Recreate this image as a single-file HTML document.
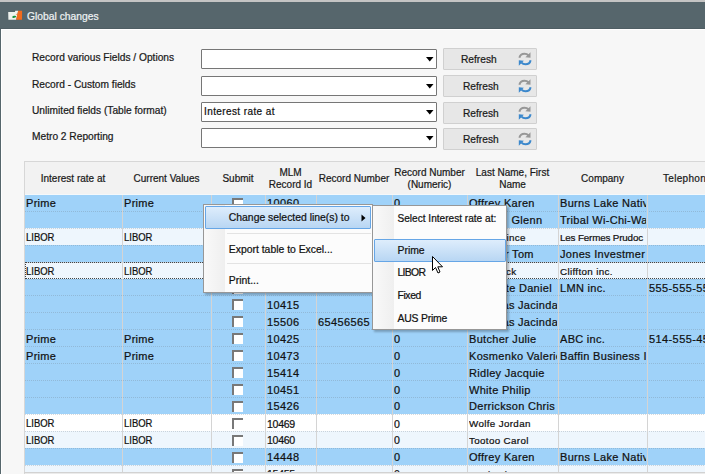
<!DOCTYPE html><html><head><meta charset="utf-8"><style>
*{box-sizing:border-box;margin:0;padding:0}
html,body{width:705px;height:474px;overflow:hidden;background:#f7f7f7;font-family:"Liberation Sans",sans-serif;position:relative}
.a{position:absolute}
.t{position:absolute;height:0;line-height:0;white-space:nowrap}
.t span{display:inline-block;vertical-align:baseline;-webkit-text-stroke-width:0.22px}
</style></head><body>
<div class="a" style="left:0;top:0;width:705px;height:2px;background:#c4c4c4"></div>
<div class="a" style="left:0;top:2px;width:705px;height:27px;background:#56666c"></div>
<div class="a" style="left:0;top:28px;width:705px;height:1px;background:#4f5e64"></div>
<div class="a" style="left:0;top:29px;width:1px;height:445px;background:#56666c"></div>
<div class="a" style="left:1px;top:29px;width:704px;height:1px;background:#fff"></div>
<div class="a" style="left:1px;top:29px;width:1px;height:445px;background:#fff"></div>
<svg class="a" style="left:6px;top:8px" width="18" height="14" viewBox="0 0 18 14">
<path d="M2.2 4.1 L9 4.1 L9.2 2.8 L12.2 2.8 L10.2 11.8 L2.4 11.8 Z" fill="#eef2ee"/>
<path d="M12.1 2.8 L16.1 2.8 L16 11.8 L10.1 11.8 Z" fill="#f26b1d"/>
<circle cx="10.5" cy="6.3" r="0.6" fill="#f5a070"/>
<ellipse cx="8.2" cy="8.85" rx="2" ry="1" transform="rotate(-12 8.2 8.85)" fill="#12923e"/>
</svg>
<div class="t" style="left:27px;top:16.65px;font-size:10.3px;color:#eef2f3;"><span>Global changes</span></div>
<div class="t" style="left:32px;top:57.68px;font-size:10.2px;color:#1a1a1a;"><span>Record various Fields / Options</span></div>
<div class="t" style="left:32px;top:84.68px;font-size:10.2px;color:#1a1a1a;"><span>Record - Custom fields</span></div>
<div class="t" style="left:32px;top:110.58px;font-size:10.2px;color:#1a1a1a;"><span>Unlimited fields (Table format)</span></div>
<div class="t" style="left:32px;top:136.68px;font-size:10.2px;color:#1a1a1a;"><span>Metro 2 Reporting</span></div>
<div class="a" style="left:201px;top:49px;width:236px;height:20px;border:1px solid #767676;border-radius:1px;background:#fff"></div>
<svg class="a" style="left:426px;top:57px" width="8" height="5" viewBox="0 0 8 5"><path d="M0 0 L7.5 0 L3.75 4.5 Z" fill="#000"/></svg>
<div class="a" style="left:443px;top:48px;width:94px;height:22px;border:1px solid #d0d0d0;border-radius:1px;background:#e7e7e7"></div>
<div class="t" style="left:461px;top:59.88px;font-size:10.2px;color:#1a1a1a;"><span>Refresh</span></div>
<svg class="a" style="left:518px;top:52px" width="14" height="14" viewBox="0 0 14 14">
<path d="M1.4 5.8 C2 2.9 4 1.7 6.5 1.7 C8.3 1.7 9.6 2.3 10.4 3.3" stroke="#979797" stroke-width="2" fill="none"/>
<path d="M12.5 0.2 L12.5 5.8 L7.4 5.3 Z" fill="#979797"/>
<path d="M12.6 8.2 C12 11.1 10 12.3 7.5 12.3 C5.7 12.3 4.4 11.7 3.6 10.7" stroke="#3c88cc" stroke-width="2" fill="none"/>
<path d="M0.8 8.2 L0.8 13.8 L5.8 8.7 Z" fill="#3c88cc"/>
</svg>
<div class="a" style="left:201px;top:76px;width:236px;height:20px;border:1px solid #767676;border-radius:1px;background:#fff"></div>
<svg class="a" style="left:426px;top:84px" width="8" height="5" viewBox="0 0 8 5"><path d="M0 0 L7.5 0 L3.75 4.5 Z" fill="#000"/></svg>
<div class="a" style="left:443px;top:75px;width:94px;height:22px;border:1px solid #d0d0d0;border-radius:1px;background:#e7e7e7"></div>
<div class="t" style="left:463px;top:86.88px;font-size:10.2px;color:#1a1a1a;"><span>Refresh</span></div>
<svg class="a" style="left:518px;top:79px" width="14" height="14" viewBox="0 0 14 14">
<path d="M1.4 5.8 C2 2.9 4 1.7 6.5 1.7 C8.3 1.7 9.6 2.3 10.4 3.3" stroke="#979797" stroke-width="2" fill="none"/>
<path d="M12.5 0.2 L12.5 5.8 L7.4 5.3 Z" fill="#979797"/>
<path d="M12.6 8.2 C12 11.1 10 12.3 7.5 12.3 C5.7 12.3 4.4 11.7 3.6 10.7" stroke="#3c88cc" stroke-width="2" fill="none"/>
<path d="M0.8 8.2 L0.8 13.8 L5.8 8.7 Z" fill="#3c88cc"/>
</svg>
<div class="a" style="left:201px;top:102px;width:236px;height:20px;border:1px solid #767676;border-radius:1px;background:#fff"></div>
<svg class="a" style="left:426px;top:110px" width="8" height="5" viewBox="0 0 8 5"><path d="M0 0 L7.5 0 L3.75 4.5 Z" fill="#000"/></svg>
<div class="t" style="left:204px;top:112.15px;font-size:10.0px;color:#111;letter-spacing:0.4px"><span>Interest rate at</span></div>
<div class="a" style="left:443px;top:102px;width:94px;height:22px;border:1px solid #d0d0d0;border-radius:1px;background:#e7e7e7"></div>
<div class="t" style="left:463px;top:113.88px;font-size:10.2px;color:#1a1a1a;"><span>Refresh</span></div>
<svg class="a" style="left:518px;top:106px" width="14" height="14" viewBox="0 0 14 14">
<path d="M1.4 5.8 C2 2.9 4 1.7 6.5 1.7 C8.3 1.7 9.6 2.3 10.4 3.3" stroke="#979797" stroke-width="2" fill="none"/>
<path d="M12.5 0.2 L12.5 5.8 L7.4 5.3 Z" fill="#979797"/>
<path d="M12.6 8.2 C12 11.1 10 12.3 7.5 12.3 C5.7 12.3 4.4 11.7 3.6 10.7" stroke="#3c88cc" stroke-width="2" fill="none"/>
<path d="M0.8 8.2 L0.8 13.8 L5.8 8.7 Z" fill="#3c88cc"/>
</svg>
<div class="a" style="left:201px;top:128px;width:236px;height:20px;border:1px solid #767676;border-radius:1px;background:#fff"></div>
<svg class="a" style="left:426px;top:136px" width="8" height="5" viewBox="0 0 8 5"><path d="M0 0 L7.5 0 L3.75 4.5 Z" fill="#000"/></svg>
<div class="a" style="left:443px;top:128px;width:94px;height:22px;border:1px solid #d0d0d0;border-radius:1px;background:#e7e7e7"></div>
<div class="t" style="left:463px;top:139.88px;font-size:10.2px;color:#1a1a1a;"><span>Refresh</span></div>
<svg class="a" style="left:518px;top:132px" width="14" height="14" viewBox="0 0 14 14">
<path d="M1.4 5.8 C2 2.9 4 1.7 6.5 1.7 C8.3 1.7 9.6 2.3 10.4 3.3" stroke="#979797" stroke-width="2" fill="none"/>
<path d="M12.5 0.2 L12.5 5.8 L7.4 5.3 Z" fill="#979797"/>
<path d="M12.6 8.2 C12 11.1 10 12.3 7.5 12.3 C5.7 12.3 4.4 11.7 3.6 10.7" stroke="#3c88cc" stroke-width="2" fill="none"/>
<path d="M0.8 8.2 L0.8 13.8 L5.8 8.7 Z" fill="#3c88cc"/>
</svg>
<div class="a" style="left:24px;top:161px;width:681px;height:1px;background:#d7d7d7"></div>
<div class="a" style="left:24px;top:161px;width:1px;height:313px;background:#d7d7d7"></div>
<div class="a" style="left:25px;top:162px;width:680px;height:32px;background:#f2f2f2"></div>
<div class="a" style="left:25px;top:194px;width:680px;height:1px;background:#fafafa"></div>
<div class="t" style="left:24px;width:98px;top:178.55px;font-size:10px;color:#1a1a1a;text-align:center"><span>Interest rate at</span></div>
<div class="t" style="left:122px;width:89px;top:178.55px;font-size:10px;color:#1a1a1a;text-align:center"><span>Current Values</span></div>
<div class="t" style="left:211px;width:54px;top:178.55px;font-size:10px;color:#1a1a1a;text-align:center"><span>Submit</span></div>
<div class="t" style="left:265px;width:51px;top:172.95000000000002px;font-size:10px;color:#1a1a1a;text-align:center"><span>MLM</span></div>
<div class="t" style="left:265px;width:51px;top:184.95000000000002px;font-size:10px;color:#1a1a1a;text-align:center"><span>Record Id</span></div>
<div class="t" style="left:316px;width:76px;top:178.55px;font-size:10px;color:#1a1a1a;text-align:center"><span>Record Number</span></div>
<div class="t" style="left:392px;width:75px;top:172.95000000000002px;font-size:10px;color:#1a1a1a;text-align:center"><span>Record Number</span></div>
<div class="t" style="left:392px;width:75px;top:184.95000000000002px;font-size:10px;color:#1a1a1a;text-align:center"><span>(Numeric)</span></div>
<div class="t" style="left:467px;width:91px;top:172.95000000000002px;font-size:10px;color:#1a1a1a;text-align:center"><span>Last Name, First</span></div>
<div class="t" style="left:467px;width:91px;top:184.95000000000002px;font-size:10px;color:#1a1a1a;text-align:center"><span>Name</span></div>
<div class="t" style="left:558px;width:89px;top:178.55px;font-size:10px;color:#1a1a1a;text-align:center"><span>Company</span></div>
<div class="t" style="left:663px;top:178.55px;font-size:10px;letter-spacing:0.3px;color:#1a1a1a"><span>Telephone</span></div>
<div class="a" style="left:25px;top:194px;width:680px;height:278px;overflow:hidden">
<div class="a" style="left:0;top:0px;width:680px;height:17px;background:#9fd2f9"></div>
<div class="a" style="left:0;top:0px;width:680px;height:1px;background:#f4f8fb"></div>
<div class="a" style="left:1px;top:0px;width:95px;height:17px;overflow:hidden"><div class="t" style="left:0px;top:9.4px;font-size:11.0px;letter-spacing:0.3px;color:#111;"><span>Prime</span></div></div>
<div class="a" style="left:99px;top:0px;width:86px;height:17px;overflow:hidden"><div class="t" style="left:0px;top:9.4px;font-size:11.0px;letter-spacing:0.3px;color:#111;"><span>Prime</span></div></div>
<div class="a" style="left:207px;top:4px;width:11px;height:11px;background:#fff;border-top:2px solid #787878;border-left:2px solid #787878"></div>
<div class="a" style="left:242px;top:0px;width:48px;height:17px;overflow:hidden"><div class="t" style="left:0px;top:9.4px;font-size:11.0px;letter-spacing:0.4px;color:#111;"><span>10060</span></div></div>
<div class="a" style="left:369px;top:0px;width:72px;height:17px;overflow:hidden"><div class="t" style="left:0px;top:9.4px;font-size:11.0px;letter-spacing:0.4px;color:#111;"><span>0</span></div></div>
<div class="a" style="left:444px;top:0px;width:88px;height:17px;overflow:hidden"><div class="t" style="left:0px;top:9.4px;font-size:11.0px;letter-spacing:0.3px;color:#111;"><span>Offrey Karen</span></div></div>
<div class="a" style="left:535px;top:0px;width:86px;height:17px;overflow:hidden"><div class="t" style="left:0px;top:9.4px;font-size:11.0px;letter-spacing:0.3px;color:#111;"><span>Burns Lake Nativ</span></div></div>
<div class="a" style="left:0;top:17px;width:680px;height:17px;background:#9fd2f9"></div>
<div class="a" style="left:0;top:17px;width:680px;height:1px;background:repeating-linear-gradient(90deg,rgba(110,120,130,0.28) 0 1px,transparent 1px 2px)"></div>
<div class="a" style="left:207px;top:21px;width:11px;height:11px;background:#fff;border-top:2px solid #787878;border-left:2px solid #787878"></div>
<div class="a" style="left:242px;top:17px;width:48px;height:17px;overflow:hidden"><div class="t" style="left:0px;top:9.32px;font-size:11.0px;letter-spacing:0.4px;color:#111;"><span>10061</span></div></div>
<div class="a" style="left:369px;top:17px;width:72px;height:17px;overflow:hidden"><div class="t" style="left:0px;top:9.32px;font-size:11.0px;letter-spacing:0.4px;color:#111;"><span>0</span></div></div>
<div class="a" style="left:444px;top:17px;width:88px;height:17px;overflow:hidden"><div class="t" style="left:42.5px;top:9.32px;font-size:11.0px;letter-spacing:0.3px;color:#111;"><span>Glenn</span></div></div>
<div class="a" style="left:535px;top:17px;width:86px;height:17px;overflow:hidden"><div class="t" style="left:0px;top:9.32px;font-size:11.0px;letter-spacing:0.3px;color:#111;"><span>Tribal Wi-Chi-Wa</span></div></div>
<div class="a" style="left:0;top:34px;width:680px;height:17px;background:#eef6fd"></div>
<div class="a" style="left:0;top:34px;width:680px;height:1px;background:repeating-linear-gradient(90deg,rgba(110,120,130,0.28) 0 1px,transparent 1px 2px)"></div>
<div class="a" style="left:1px;top:34px;width:95px;height:17px;overflow:hidden"><div class="t" style="left:0px;top:10.29px;font-size:10.3px;letter-spacing:0px;color:#111;transform:scaleX(0.92);transform-origin:0 0;"><span>LIBOR</span></div></div>
<div class="a" style="left:99px;top:34px;width:86px;height:17px;overflow:hidden"><div class="t" style="left:0px;top:10.29px;font-size:10.3px;letter-spacing:0px;color:#111;transform:scaleX(0.92);transform-origin:0 0;"><span>LIBOR</span></div></div>
<div class="a" style="left:207px;top:38px;width:11px;height:11px;background:#fff;border-top:2px solid #787878;border-left:2px solid #787878"></div>
<div class="a" style="left:242px;top:34px;width:48px;height:17px;overflow:hidden"><div class="t" style="left:0px;top:9.38px;font-size:10.6px;letter-spacing:-0.3px;color:#111;"><span>10062</span></div></div>
<div class="a" style="left:369px;top:34px;width:72px;height:17px;overflow:hidden"><div class="t" style="left:0px;top:9.38px;font-size:10.6px;letter-spacing:-0.3px;color:#111;"><span>0</span></div></div>
<div class="a" style="left:444px;top:34px;width:88px;height:17px;overflow:hidden"><div class="t" style="left:37.5px;top:9.66px;font-size:9.8px;letter-spacing:0.35px;color:#111;"><span>ince</span></div></div>
<div class="a" style="left:535px;top:34px;width:86px;height:17px;overflow:hidden"><div class="t" style="left:0px;top:9.66px;font-size:9.8px;letter-spacing:-0.15px;color:#111;"><span>Les Fermes Prudoc</span></div></div>
<div class="a" style="left:0;top:51px;width:680px;height:17px;background:#9fd2f9"></div>
<div class="a" style="left:0;top:51px;width:680px;height:1px;background:repeating-linear-gradient(90deg,rgba(110,120,130,0.28) 0 1px,transparent 1px 2px)"></div>
<div class="a" style="left:207px;top:55px;width:11px;height:11px;background:#fff;border-top:2px solid #787878;border-left:2px solid #787878"></div>
<div class="a" style="left:242px;top:51px;width:48px;height:17px;overflow:hidden"><div class="t" style="left:0px;top:9.17px;font-size:11.0px;letter-spacing:0.4px;color:#111;"><span>10063</span></div></div>
<div class="a" style="left:369px;top:51px;width:72px;height:17px;overflow:hidden"><div class="t" style="left:0px;top:9.17px;font-size:11.0px;letter-spacing:0.4px;color:#111;"><span>0</span></div></div>
<div class="a" style="left:444px;top:51px;width:88px;height:17px;overflow:hidden"><div class="t" style="left:36px;top:9.17px;font-size:11.0px;letter-spacing:0.3px;color:#111;"><span>r Tom</span></div></div>
<div class="a" style="left:535px;top:51px;width:86px;height:17px;overflow:hidden"><div class="t" style="left:0px;top:9.17px;font-size:11.0px;letter-spacing:0.3px;color:#111;"><span>Jones Investmer</span></div></div>
<div class="a" style="left:0;top:68px;width:680px;height:17px;background:#eef6fd"></div>
<div class="a" style="left:0;top:68px;width:680px;height:1px;background:repeating-linear-gradient(90deg,rgba(110,120,130,0.28) 0 1px,transparent 1px 2px)"></div>
<div class="a" style="left:1px;top:68px;width:95px;height:17px;overflow:hidden"><div class="t" style="left:0px;top:10.13px;font-size:10.3px;letter-spacing:0px;color:#111;transform:scaleX(0.92);transform-origin:0 0;"><span>LIBOR</span></div></div>
<div class="a" style="left:99px;top:68px;width:86px;height:17px;overflow:hidden"><div class="t" style="left:0px;top:10.13px;font-size:10.3px;letter-spacing:0px;color:#111;transform:scaleX(0.92);transform-origin:0 0;"><span>LIBOR</span></div></div>
<div class="a" style="left:207px;top:72px;width:11px;height:11px;background:#fff;border-top:2px solid #787878;border-left:2px solid #787878"></div>
<div class="a" style="left:242px;top:68px;width:48px;height:17px;overflow:hidden"><div class="t" style="left:0px;top:9.22px;font-size:10.6px;letter-spacing:-0.3px;color:#111;"><span>10064</span></div></div>
<div class="a" style="left:369px;top:68px;width:72px;height:17px;overflow:hidden"><div class="t" style="left:0px;top:9.22px;font-size:10.6px;letter-spacing:-0.3px;color:#111;"><span>0</span></div></div>
<div class="a" style="left:444px;top:68px;width:88px;height:17px;overflow:hidden"><div class="t" style="left:37px;top:9.5px;font-size:9.8px;letter-spacing:0.35px;color:#111;"><span>ck</span></div></div>
<div class="a" style="left:535px;top:68px;width:86px;height:17px;overflow:hidden"><div class="t" style="left:0px;top:9.5px;font-size:9.8px;letter-spacing:0.35px;color:#111;"><span>Cliffton inc.</span></div></div>
<div class="a" style="left:0;top:85px;width:680px;height:16px;background:#9fd2f9"></div>
<div class="a" style="left:0;top:85px;width:680px;height:1px;background:repeating-linear-gradient(90deg,rgba(110,120,130,0.28) 0 1px,transparent 1px 2px)"></div>
<div class="a" style="left:207px;top:89px;width:11px;height:11px;background:#fff;border-top:2px solid #787878;border-left:2px solid #787878"></div>
<div class="a" style="left:242px;top:85px;width:48px;height:16px;overflow:hidden"><div class="t" style="left:0px;top:9.0px;font-size:11.0px;letter-spacing:0.4px;color:#111;"><span>10065</span></div></div>
<div class="a" style="left:369px;top:85px;width:72px;height:16px;overflow:hidden"><div class="t" style="left:0px;top:9.0px;font-size:11.0px;letter-spacing:0.4px;color:#111;"><span>0</span></div></div>
<div class="a" style="left:444px;top:85px;width:88px;height:16px;overflow:hidden"><div class="t" style="left:36.80000000000001px;top:9.0px;font-size:11.0px;letter-spacing:0.3px;color:#111;"><span>te Daniel</span></div></div>
<div class="a" style="left:535px;top:85px;width:86px;height:16px;overflow:hidden"><div class="t" style="left:0px;top:9.0px;font-size:11.0px;letter-spacing:0.3px;color:#111;"><span>LMN inc.</span></div></div>
<div class="a" style="left:624px;top:85px;width:110px;height:16px;overflow:hidden"><div class="t" style="left:0px;top:9.0px;font-size:11.0px;letter-spacing:0.4px;color:#111;"><span>555-555-5555</span></div></div>
<div class="a" style="left:0;top:101px;width:680px;height:17px;background:#9fd2f9"></div>
<div class="a" style="left:0;top:101px;width:680px;height:1px;background:repeating-linear-gradient(90deg,rgba(110,120,130,0.28) 0 1px,transparent 1px 2px)"></div>
<div class="a" style="left:207px;top:105px;width:11px;height:11px;background:#fff;border-top:2px solid #787878;border-left:2px solid #787878"></div>
<div class="a" style="left:242px;top:101px;width:48px;height:17px;overflow:hidden"><div class="t" style="left:0px;top:9.93px;font-size:11.0px;letter-spacing:0.4px;color:#111;"><span>10415</span></div></div>
<div class="a" style="left:369px;top:101px;width:72px;height:17px;overflow:hidden"><div class="t" style="left:0px;top:9.93px;font-size:11.0px;letter-spacing:0.4px;color:#111;"><span>0</span></div></div>
<div class="a" style="left:444px;top:101px;width:88px;height:17px;overflow:hidden"><div class="t" style="left:33.5px;top:9.93px;font-size:11.0px;letter-spacing:0.3px;color:#111;"><span>as Jacinda</span></div></div>
<div class="a" style="left:0;top:118px;width:680px;height:17px;background:#9fd2f9"></div>
<div class="a" style="left:0;top:118px;width:680px;height:1px;background:repeating-linear-gradient(90deg,rgba(110,120,130,0.28) 0 1px,transparent 1px 2px)"></div>
<div class="a" style="left:207px;top:122px;width:11px;height:11px;background:#fff;border-top:2px solid #787878;border-left:2px solid #787878"></div>
<div class="a" style="left:242px;top:118px;width:48px;height:17px;overflow:hidden"><div class="t" style="left:0px;top:9.85px;font-size:11.0px;letter-spacing:0.4px;color:#111;"><span>15506</span></div></div>
<div class="a" style="left:293px;top:118px;width:73px;height:17px;overflow:hidden"><div class="t" style="left:0px;top:9.85px;font-size:11.0px;letter-spacing:0.4px;color:#111;"><span>65456565</span></div></div>
<div class="a" style="left:369px;top:118px;width:72px;height:17px;overflow:hidden"><div class="t" style="left:0px;top:9.85px;font-size:11.0px;letter-spacing:0.4px;color:#111;"><span>0</span></div></div>
<div class="a" style="left:444px;top:118px;width:88px;height:17px;overflow:hidden"><div class="t" style="left:33.5px;top:9.85px;font-size:11.0px;letter-spacing:0.3px;color:#111;"><span>as Jacinda</span></div></div>
<div class="a" style="left:0;top:135px;width:680px;height:17px;background:#9fd2f9"></div>
<div class="a" style="left:0;top:135px;width:680px;height:1px;background:repeating-linear-gradient(90deg,rgba(110,120,130,0.28) 0 1px,transparent 1px 2px)"></div>
<div class="a" style="left:1px;top:135px;width:95px;height:17px;overflow:hidden"><div class="t" style="left:0px;top:9.76px;font-size:11.0px;letter-spacing:0.3px;color:#111;"><span>Prime</span></div></div>
<div class="a" style="left:99px;top:135px;width:86px;height:17px;overflow:hidden"><div class="t" style="left:0px;top:9.76px;font-size:11.0px;letter-spacing:0.3px;color:#111;"><span>Prime</span></div></div>
<div class="a" style="left:207px;top:139px;width:11px;height:11px;background:#fff;border-top:2px solid #787878;border-left:2px solid #787878"></div>
<div class="a" style="left:242px;top:135px;width:48px;height:17px;overflow:hidden"><div class="t" style="left:0px;top:9.76px;font-size:11.0px;letter-spacing:0.4px;color:#111;"><span>10425</span></div></div>
<div class="a" style="left:369px;top:135px;width:72px;height:17px;overflow:hidden"><div class="t" style="left:0px;top:9.76px;font-size:11.0px;letter-spacing:0.4px;color:#111;"><span>0</span></div></div>
<div class="a" style="left:444px;top:135px;width:88px;height:17px;overflow:hidden"><div class="t" style="left:0px;top:9.76px;font-size:11.0px;letter-spacing:0.3px;color:#111;"><span>Butcher Julie</span></div></div>
<div class="a" style="left:535px;top:135px;width:86px;height:17px;overflow:hidden"><div class="t" style="left:0px;top:9.76px;font-size:11.0px;letter-spacing:0.3px;color:#111;"><span>ABC inc.</span></div></div>
<div class="a" style="left:624px;top:135px;width:110px;height:17px;overflow:hidden"><div class="t" style="left:0px;top:9.76px;font-size:11.0px;letter-spacing:0.4px;color:#111;"><span>514-555-4545</span></div></div>
<div class="a" style="left:0;top:152px;width:680px;height:17px;background:#9fd2f9"></div>
<div class="a" style="left:0;top:152px;width:680px;height:1px;background:repeating-linear-gradient(90deg,rgba(110,120,130,0.28) 0 1px,transparent 1px 2px)"></div>
<div class="a" style="left:1px;top:152px;width:95px;height:17px;overflow:hidden"><div class="t" style="left:0px;top:9.69px;font-size:11.0px;letter-spacing:0.3px;color:#111;"><span>Prime</span></div></div>
<div class="a" style="left:99px;top:152px;width:86px;height:17px;overflow:hidden"><div class="t" style="left:0px;top:9.69px;font-size:11.0px;letter-spacing:0.3px;color:#111;"><span>Prime</span></div></div>
<div class="a" style="left:207px;top:156px;width:11px;height:11px;background:#fff;border-top:2px solid #787878;border-left:2px solid #787878"></div>
<div class="a" style="left:242px;top:152px;width:48px;height:17px;overflow:hidden"><div class="t" style="left:0px;top:9.69px;font-size:11.0px;letter-spacing:0.4px;color:#111;"><span>10473</span></div></div>
<div class="a" style="left:369px;top:152px;width:72px;height:17px;overflow:hidden"><div class="t" style="left:0px;top:9.69px;font-size:11.0px;letter-spacing:0.4px;color:#111;"><span>0</span></div></div>
<div class="a" style="left:444px;top:152px;width:88px;height:17px;overflow:hidden"><div class="t" style="left:0px;top:9.69px;font-size:11.0px;letter-spacing:0.3px;color:#111;"><span>Kosmenko Valerie</span></div></div>
<div class="a" style="left:535px;top:152px;width:86px;height:17px;overflow:hidden"><div class="t" style="left:0px;top:9.69px;font-size:11.0px;letter-spacing:0.3px;color:#111;"><span>Baffin Business Inc</span></div></div>
<div class="a" style="left:0;top:169px;width:680px;height:17px;background:#9fd2f9"></div>
<div class="a" style="left:0;top:169px;width:680px;height:1px;background:repeating-linear-gradient(90deg,rgba(110,120,130,0.28) 0 1px,transparent 1px 2px)"></div>
<div class="a" style="left:207px;top:173px;width:11px;height:11px;background:#fff;border-top:2px solid #787878;border-left:2px solid #787878"></div>
<div class="a" style="left:242px;top:169px;width:48px;height:17px;overflow:hidden"><div class="t" style="left:0px;top:9.61px;font-size:11.0px;letter-spacing:0.4px;color:#111;"><span>15414</span></div></div>
<div class="a" style="left:369px;top:169px;width:72px;height:17px;overflow:hidden"><div class="t" style="left:0px;top:9.61px;font-size:11.0px;letter-spacing:0.4px;color:#111;"><span>0</span></div></div>
<div class="a" style="left:444px;top:169px;width:88px;height:17px;overflow:hidden"><div class="t" style="left:0px;top:9.61px;font-size:11.0px;letter-spacing:0.3px;color:#111;"><span>Ridley Jacquie</span></div></div>
<div class="a" style="left:0;top:186px;width:680px;height:17px;background:#9fd2f9"></div>
<div class="a" style="left:0;top:186px;width:680px;height:1px;background:repeating-linear-gradient(90deg,rgba(110,120,130,0.28) 0 1px,transparent 1px 2px)"></div>
<div class="a" style="left:207px;top:190px;width:11px;height:11px;background:#fff;border-top:2px solid #787878;border-left:2px solid #787878"></div>
<div class="a" style="left:242px;top:186px;width:48px;height:17px;overflow:hidden"><div class="t" style="left:0px;top:9.52px;font-size:11.0px;letter-spacing:0.4px;color:#111;"><span>10451</span></div></div>
<div class="a" style="left:369px;top:186px;width:72px;height:17px;overflow:hidden"><div class="t" style="left:0px;top:9.52px;font-size:11.0px;letter-spacing:0.4px;color:#111;"><span>0</span></div></div>
<div class="a" style="left:444px;top:186px;width:88px;height:17px;overflow:hidden"><div class="t" style="left:0px;top:9.52px;font-size:11.0px;letter-spacing:0.3px;color:#111;"><span>White Philip</span></div></div>
<div class="a" style="left:0;top:203px;width:680px;height:17px;background:#9fd2f9"></div>
<div class="a" style="left:0;top:203px;width:680px;height:1px;background:repeating-linear-gradient(90deg,rgba(110,120,130,0.28) 0 1px,transparent 1px 2px)"></div>
<div class="a" style="left:207px;top:207px;width:11px;height:11px;background:#fff;border-top:2px solid #787878;border-left:2px solid #787878"></div>
<div class="a" style="left:242px;top:203px;width:48px;height:17px;overflow:hidden"><div class="t" style="left:0px;top:9.45px;font-size:11.0px;letter-spacing:0.4px;color:#111;"><span>15426</span></div></div>
<div class="a" style="left:369px;top:203px;width:72px;height:17px;overflow:hidden"><div class="t" style="left:0px;top:9.45px;font-size:11.0px;letter-spacing:0.4px;color:#111;"><span>0</span></div></div>
<div class="a" style="left:444px;top:203px;width:88px;height:17px;overflow:hidden"><div class="t" style="left:0px;top:9.45px;font-size:11.0px;letter-spacing:0.3px;color:#111;"><span>Derrickson Chris</span></div></div>
<div class="a" style="left:0;top:220px;width:680px;height:17px;background:#ffffff"></div>
<div class="a" style="left:0;top:220px;width:680px;height:1px;background:repeating-linear-gradient(90deg,rgba(110,120,130,0.28) 0 1px,transparent 1px 2px)"></div>
<div class="a" style="left:1px;top:220px;width:95px;height:17px;overflow:hidden"><div class="t" style="left:0px;top:10.41px;font-size:10.3px;letter-spacing:0px;color:#111;transform:scaleX(0.92);transform-origin:0 0;"><span>LIBOR</span></div></div>
<div class="a" style="left:99px;top:220px;width:86px;height:17px;overflow:hidden"><div class="t" style="left:0px;top:10.41px;font-size:10.3px;letter-spacing:0px;color:#111;transform:scaleX(0.92);transform-origin:0 0;"><span>LIBOR</span></div></div>
<div class="a" style="left:207px;top:224px;width:11px;height:11px;background:#fff;border-top:2px solid #787878;border-left:2px solid #787878"></div>
<div class="a" style="left:242px;top:220px;width:48px;height:17px;overflow:hidden"><div class="t" style="left:0px;top:9.5px;font-size:10.6px;letter-spacing:-0.3px;color:#111;"><span>10469</span></div></div>
<div class="a" style="left:369px;top:220px;width:72px;height:17px;overflow:hidden"><div class="t" style="left:0px;top:9.5px;font-size:10.6px;letter-spacing:-0.3px;color:#111;"><span>0</span></div></div>
<div class="a" style="left:444px;top:220px;width:88px;height:17px;overflow:hidden"><div class="t" style="left:0px;top:9.78px;font-size:9.8px;letter-spacing:0.35px;color:#111;"><span>Wolfe Jordan</span></div></div>
<div class="a" style="left:0;top:237px;width:680px;height:17px;background:#eef6fd"></div>
<div class="a" style="left:0;top:237px;width:680px;height:1px;background:repeating-linear-gradient(90deg,rgba(110,120,130,0.28) 0 1px,transparent 1px 2px)"></div>
<div class="a" style="left:1px;top:237px;width:95px;height:17px;overflow:hidden"><div class="t" style="left:0px;top:10.33px;font-size:10.3px;letter-spacing:0px;color:#111;transform:scaleX(0.92);transform-origin:0 0;"><span>LIBOR</span></div></div>
<div class="a" style="left:99px;top:237px;width:86px;height:17px;overflow:hidden"><div class="t" style="left:0px;top:10.33px;font-size:10.3px;letter-spacing:0px;color:#111;transform:scaleX(0.92);transform-origin:0 0;"><span>LIBOR</span></div></div>
<div class="a" style="left:207px;top:241px;width:11px;height:11px;background:#fff;border-top:2px solid #787878;border-left:2px solid #787878"></div>
<div class="a" style="left:242px;top:237px;width:48px;height:17px;overflow:hidden"><div class="t" style="left:0px;top:9.42px;font-size:10.6px;letter-spacing:-0.3px;color:#111;"><span>10460</span></div></div>
<div class="a" style="left:369px;top:237px;width:72px;height:17px;overflow:hidden"><div class="t" style="left:0px;top:9.42px;font-size:10.6px;letter-spacing:-0.3px;color:#111;"><span>0</span></div></div>
<div class="a" style="left:444px;top:237px;width:88px;height:17px;overflow:hidden"><div class="t" style="left:0px;top:9.7px;font-size:9.8px;letter-spacing:0.35px;color:#111;"><span>Tootoo Carol</span></div></div>
<div class="a" style="left:0;top:254px;width:680px;height:17px;background:#9fd2f9"></div>
<div class="a" style="left:0;top:254px;width:680px;height:1px;background:repeating-linear-gradient(90deg,rgba(110,120,130,0.28) 0 1px,transparent 1px 2px)"></div>
<div class="a" style="left:207px;top:258px;width:11px;height:11px;background:#fff;border-top:2px solid #787878;border-left:2px solid #787878"></div>
<div class="a" style="left:242px;top:254px;width:48px;height:17px;overflow:hidden"><div class="t" style="left:0px;top:9.21px;font-size:11.0px;letter-spacing:0.4px;color:#111;"><span>14448</span></div></div>
<div class="a" style="left:369px;top:254px;width:72px;height:17px;overflow:hidden"><div class="t" style="left:0px;top:9.21px;font-size:11.0px;letter-spacing:0.4px;color:#111;"><span>0</span></div></div>
<div class="a" style="left:444px;top:254px;width:88px;height:17px;overflow:hidden"><div class="t" style="left:0px;top:9.21px;font-size:11.0px;letter-spacing:0.3px;color:#111;"><span>Offrey Karen</span></div></div>
<div class="a" style="left:535px;top:254px;width:86px;height:17px;overflow:hidden"><div class="t" style="left:0px;top:9.21px;font-size:11.0px;letter-spacing:0.3px;color:#111;"><span>Burns Lake Nativ</span></div></div>
<div class="a" style="left:0;top:271px;width:680px;height:17px;background:#eef6fd"></div>
<div class="a" style="left:0;top:271px;width:680px;height:1px;background:repeating-linear-gradient(90deg,rgba(110,120,130,0.28) 0 1px,transparent 1px 2px)"></div>
<div class="a" style="left:207px;top:275px;width:11px;height:11px;background:#fff;border-top:2px solid #787878;border-left:2px solid #787878"></div>
<div class="a" style="left:242px;top:271px;width:48px;height:17px;overflow:hidden"><div class="t" style="left:0px;top:9.26px;font-size:10.6px;letter-spacing:-0.3px;color:#111;"><span>15455</span></div></div>
<div class="a" style="left:369px;top:271px;width:72px;height:17px;overflow:hidden"><div class="t" style="left:0px;top:9.26px;font-size:10.6px;letter-spacing:-0.3px;color:#111;"><span>0</span></div></div>
<div class="a" style="left:444px;top:271px;width:88px;height:17px;overflow:hidden"><div class="t" style="left:0px;top:9.54px;font-size:9.8px;letter-spacing:0.35px;color:#111;"><span>Lewis Tim</span></div></div>
<div class="a" style="left:0;top:68px;width:700px;height:17px;border:1px dotted #444"></div>
<div class="a" style="left:97px;top:1px;width:1px;height:300px;background:#d4d4d4"></div>
<div class="a" style="left:186px;top:1px;width:1px;height:300px;background:#d4d4d4"></div>
<div class="a" style="left:240px;top:1px;width:1px;height:300px;background:#d4d4d4"></div>
<div class="a" style="left:291px;top:1px;width:1px;height:300px;background:#d4d4d4"></div>
<div class="a" style="left:367px;top:1px;width:1px;height:300px;background:#d4d4d4"></div>
<div class="a" style="left:442px;top:1px;width:1px;height:300px;background:#d4d4d4"></div>
<div class="a" style="left:533px;top:1px;width:1px;height:300px;background:#d4d4d4"></div>
<div class="a" style="left:622px;top:1px;width:1px;height:300px;background:#d4d4d4"></div>
</div>
<div class="a" style="left:24px;top:472px;width:681px;height:1px;background:#d2d2d2"></div>
<div class="a" style="left:25px;top:473px;width:680px;height:1px;background:#ebebeb"></div>
<div class="a" style="left:203px;top:204px;width:170px;height:89px;border:1px solid #979797;background:#f5f5f5;box-shadow:2px 2px 2px rgba(0,0,0,0.25)"></div>
<div class="a" style="left:204px;top:205px;width:168px;height:87px;background:#fcfcfc"></div>
<div class="a" style="left:204px;top:205px;width:21px;height:87px;background:linear-gradient(90deg,#f9f9f9,#efefef)"></div>
<div class="a" style="left:205px;top:206px;width:166px;height:23px;border:1px solid #66a6e6;border-radius:1px;background:linear-gradient(#deedfc,#b8d6f3)"></div>
<div class="a" style="left:227px;top:233px;width:144px;height:1px;background:#e3e3e3"></div>
<div class="a" style="left:227px;top:263px;width:144px;height:1px;background:#e3e3e3"></div>
<div class="t" style="left:228.8px;top:218.21px;font-size:10.4px;color:#111;"><span>Change selected line(s) to</span></div>
<svg class="a" style="left:361px;top:214px" width="5" height="8" viewBox="0 0 5 8"><path d="M0.5 0.5 L4.5 4 L0.5 7.5 Z" fill="#000"/></svg>
<div class="t" style="left:228.8px;top:249.71px;font-size:10.4px;color:#111;"><span>Export table to Excel...</span></div>
<div class="t" style="left:228.8px;top:280.51px;font-size:10.4px;color:#111;"><span>Print...</span></div>
<div class="a" style="left:372px;top:205px;width:135px;height:125px;border:1px solid #979797;background:#fcfcfc;box-shadow:2px 2px 2px rgba(0,0,0,0.25)"></div>
<div class="a" style="left:373px;top:206px;width:21px;height:123px;background:linear-gradient(90deg,#f9f9f9,#efefef)"></div>
<div class="a" style="left:374px;top:239px;width:132px;height:23px;border:1px solid #66a6e6;border-radius:1px;background:linear-gradient(#deedfc,#b8d6f3)"></div>
<div class="t" style="left:397.5px;top:219.42px;font-size:10.1px;color:#111;"><span>Select Interest rate at:</span></div>
<div class="t" style="left:397.5px;top:251.01px;font-size:10.4px;color:#111;letter-spacing:0px"><span>Prime</span></div>
<div class="t" style="left:397.5px;top:273.41px;font-size:10.4px;color:#111;letter-spacing:-0.7px"><span>LIBOR</span></div>
<div class="t" style="left:397.5px;top:295.91px;font-size:10.4px;color:#111;letter-spacing:-0.4px"><span>Fixed</span></div>
<div class="t" style="left:397.5px;top:318.51px;font-size:10.4px;color:#111;letter-spacing:-0.2px"><span>AUS Prime</span></div>
<svg class="a" style="left:431px;top:255px" width="14" height="20" viewBox="0 0 14 20">
<path d="M1.5 1.5 L1.5 15.5 L4.5 12.5 L7 18 L9 17 L6.8 11.8 L11.5 11.8 Z" fill="#fff" stroke="#000" stroke-width="1" stroke-linejoin="miter"/>
</svg>
</body></html>
